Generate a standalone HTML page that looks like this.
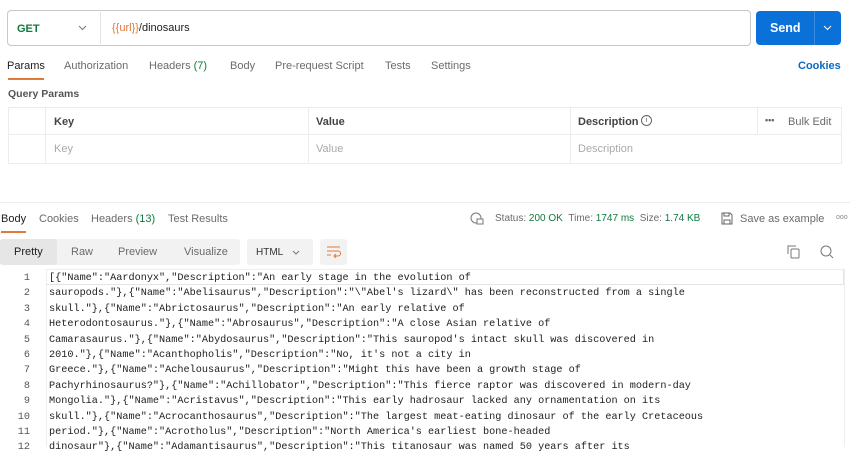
<!DOCTYPE html><html><head><style>
body{margin:0;width:850px;height:446px;overflow:hidden;background:#fff;font-family:"Liberation Sans",sans-serif;font-size:11px;color:#212121;position:relative}
.a{position:absolute;white-space:nowrap}
.g{color:#6b6b6b}
.gr{color:#0f7b3e}
.code{font-family:"Liberation Mono",monospace;font-size:10.2px;color:#212121}
.ln{color:#555;text-align:right;width:20px}
</style></head><body>
<div class="a" style="left:7px;top:10px;width:742px;height:34px;border:1px solid #c8c8c8;border-radius:4px"></div>
<div class="a" style="left:17px;top:23px;font-weight:bold;color:#0f7b3e;font-size:11px">GET</div>
<svg class="a" style="left:78px;top:25px" width="9" height="6"><path d="M1 1l3.5 3.5L8 1" stroke="#777" fill="none"/></svg>
<div class="a" style="left:100px;top:12px;width:1px;height:32px;background:#e4e4e4"></div>
<div class="a" style="left:112px;top:22px;font-size:11px"><span style="color:#e07a3b">{{url}}</span>/dinosaurs</div>
<div class="a" style="left:756px;top:11px;width:85px;height:34px;background:#0a71d9;border-radius:4px"></div>
<div class="a" style="left:770px;top:21px;color:#fff;font-weight:bold;font-size:12.5px">Send</div>
<div class="a" style="left:814px;top:11px;width:1px;height:34px;background:#3a8be0"></div>
<svg class="a" style="left:823px;top:25px" width="9" height="6"><path d="M1 1l3.5 3.5L8 1" stroke="#fff" fill="none"/></svg>

<div class="a" style="left:7px;top:60px;font-size:11px">Params</div>
<div class="a" style="left:8px;top:78px;width:36px;height:1.5px;background:#e07a3b"></div>
<div class="a g" style="left:64px;top:60px">Authorization</div>
<div class="a g" style="left:149px;top:60px">Headers <span class="gr">(7)</span></div>
<div class="a g" style="left:230px;top:60px">Body</div>
<div class="a g" style="left:275px;top:60px">Pre-request Script</div>
<div class="a g" style="left:385px;top:60px">Tests</div>
<div class="a g" style="left:431px;top:60px">Settings</div>
<div class="a" style="left:798px;top:60px;color:#0a6ac4;font-weight:bold">Cookies</div>
<div class="a" style="left:8px;top:88px;font-weight:bold;color:#555;font-size:10.5px">Query Params</div>

<div class="a" style="left:8px;top:107px;width:832px;height:55px;border:1px solid #ececec"></div>
<div class="a" style="left:8px;top:134px;width:833px;height:1px;background:#ececec"></div>
<div class="a" style="left:45px;top:107px;width:1px;height:56px;background:#ececec"></div>
<div class="a" style="left:308px;top:107px;width:1px;height:56px;background:#ececec"></div>
<div class="a" style="left:570px;top:107px;width:1px;height:56px;background:#ececec"></div>
<div class="a" style="left:757px;top:107px;width:1px;height:27px;background:#ececec"></div>
<div class="a" style="left:54px;top:116px;font-weight:bold;color:#444">Key</div>
<div class="a" style="left:316px;top:116px;font-weight:bold;color:#444">Value</div>
<div class="a" style="left:578px;top:116px;font-weight:bold;color:#444">Description</div>
<div class="a" style="left:641px;top:115px;width:9px;height:9px;border:1px solid #666;border-radius:50%;font-size:7px;text-align:center;line-height:9px;color:#555">i</div>
<div class="a" style="left:765px;top:115px;color:#666;font-weight:bold;font-size:9px">•••</div>
<div class="a g" style="left:788px;top:116px">Bulk Edit</div>
<div class="a" style="left:54px;top:143px;color:#aaa">Key</div>
<div class="a" style="left:316px;top:143px;color:#aaa">Value</div>
<div class="a" style="left:578px;top:143px;color:#aaa">Description</div>

<div class="a" style="left:0;top:202px;width:850px;height:1px;background:#eee"></div>
<div class="a" style="left:1px;top:213px">Body</div>
<div class="a" style="left:1px;top:231px;width:25px;height:1.5px;background:#e07a3b"></div>
<div class="a g" style="left:39px;top:213px">Cookies</div>
<div class="a g" style="left:91px;top:213px">Headers <span class="gr">(13)</span></div>
<div class="a g" style="left:168px;top:213px">Test Results</div>
<svg class="a" style="left:470px;top:212px" width="14" height="13"><circle cx="6" cy="6" r="5" stroke="#777" fill="none"/><rect x="7" y="7" width="6" height="5" fill="#fff" stroke="#777"/></svg>
<div class="a g" style="left:495px;top:213px;font-size:10px">Status: <span class="gr">200 OK</span> &nbsp;Time: <span class="gr">1747 ms</span> &nbsp;Size: <span class="gr">1.74 KB</span></div>
<svg class="a" style="left:721px;top:212px" width="12" height="13"><path d="M1 1h8l2 2v9H1z M3 1v3h5V1 M3 12V8h6v4" stroke="#666" fill="none"/></svg>
<div class="a g" style="left:740px;top:213px;font-size:11px">Save as example</div>
<div class="a" style="left:836px;top:214px;color:#888;font-size:7px">ooo</div>

<div class="a" style="left:0;top:239px;width:240px;height:26px;background:#f2f2f2;border-radius:3px"></div>
<div class="a" style="left:0;top:239px;width:57px;height:26px;background:#e6e6e6;border-radius:3px"></div>
<div class="a" style="left:14px;top:246px">Pretty</div>
<div class="a g" style="left:71px;top:246px">Raw</div>
<div class="a g" style="left:118px;top:246px">Preview</div>
<div class="a g" style="left:184px;top:246px">Visualize</div>
<div class="a" style="left:247px;top:239px;width:66px;height:26px;background:#f2f2f2;border-radius:3px"></div>
<div class="a" style="left:256px;top:247px;font-size:10px;color:#333">HTML</div>
<svg class="a" style="left:292px;top:250px" width="8" height="5"><path d="M1 1l3 3 3-3" stroke="#777" fill="none"/></svg>
<div class="a" style="left:320px;top:239px;width:27px;height:26px;background:#f2f2f2;border-radius:3px"></div>
<svg class="a" style="left:326px;top:245px" width="15" height="13"><path d="M1 2h13M1 6h11a2.5 2.5 0 010 5H8M10 9l-2 2 2 2M1 10h4" stroke="#e07a3b" fill="none"/></svg>
<svg class="a" style="left:787px;top:245px" width="13" height="14"><path d="M1 9V1h8" stroke="#777" fill="none"/><rect x="4" y="4" width="8" height="9" rx="1" stroke="#777" fill="none"/></svg>
<svg class="a" style="left:820px;top:245px" width="14" height="14"><circle cx="6" cy="6" r="5" stroke="#777" fill="none"/><path d="M10 10l3 3" stroke="#777"/></svg>
<div class="a" style="left:46px;top:269px;width:797px;height:177px;border:1px solid #eee;border-bottom:none"></div>
<div class="a" style="left:46px;top:269px;width:797px;height:15px;border-bottom:1px solid #e4e4e4;border-right:1px solid #e4e4e4"></div>

<div class="a code" style="left:10px;top:271px;line-height:15.4px">
<div style="display:flex"><div class="ln">1</div><div style="margin-left:19px">[{"Name":"Aardonyx","Description":"An early stage in the evolution of</div></div>
<div style="display:flex"><div class="ln">2</div><div style="margin-left:19px">sauropods."},{"Name":"Abelisaurus","Description":"\"Abel's lizard\" has been reconstructed from a single</div></div>
<div style="display:flex"><div class="ln">3</div><div style="margin-left:19px">skull."},{"Name":"Abrictosaurus","Description":"An early relative of</div></div>
<div style="display:flex"><div class="ln">4</div><div style="margin-left:19px">Heterodontosaurus."},{"Name":"Abrosaurus","Description":"A close Asian relative of</div></div>
<div style="display:flex"><div class="ln">5</div><div style="margin-left:19px">Camarasaurus."},{"Name":"Abydosaurus","Description":"This sauropod's intact skull was discovered in</div></div>
<div style="display:flex"><div class="ln">6</div><div style="margin-left:19px">2010."},{"Name":"Acanthopholis","Description":"No, it's not a city in</div></div>
<div style="display:flex"><div class="ln">7</div><div style="margin-left:19px">Greece."},{"Name":"Achelousaurus","Description":"Might this have been a growth stage of</div></div>
<div style="display:flex"><div class="ln">8</div><div style="margin-left:19px">Pachyrhinosaurus?"},{"Name":"Achillobator","Description":"This fierce raptor was discovered in modern-day</div></div>
<div style="display:flex"><div class="ln">9</div><div style="margin-left:19px">Mongolia."},{"Name":"Acristavus","Description":"This early hadrosaur lacked any ornamentation on its</div></div>
<div style="display:flex"><div class="ln">10</div><div style="margin-left:19px">skull."},{"Name":"Acrocanthosaurus","Description":"The largest meat-eating dinosaur of the early Cretaceous</div></div>
<div style="display:flex"><div class="ln">11</div><div style="margin-left:19px">period."},{"Name":"Acrotholus","Description":"North America's earliest bone-headed</div></div>
<div style="display:flex"><div class="ln">12</div><div style="margin-left:19px">dinosaur"},{"Name":"Adamantisaurus","Description":"This titanosaur was named 50 years after its</div></div>
</div>
</body></html>
